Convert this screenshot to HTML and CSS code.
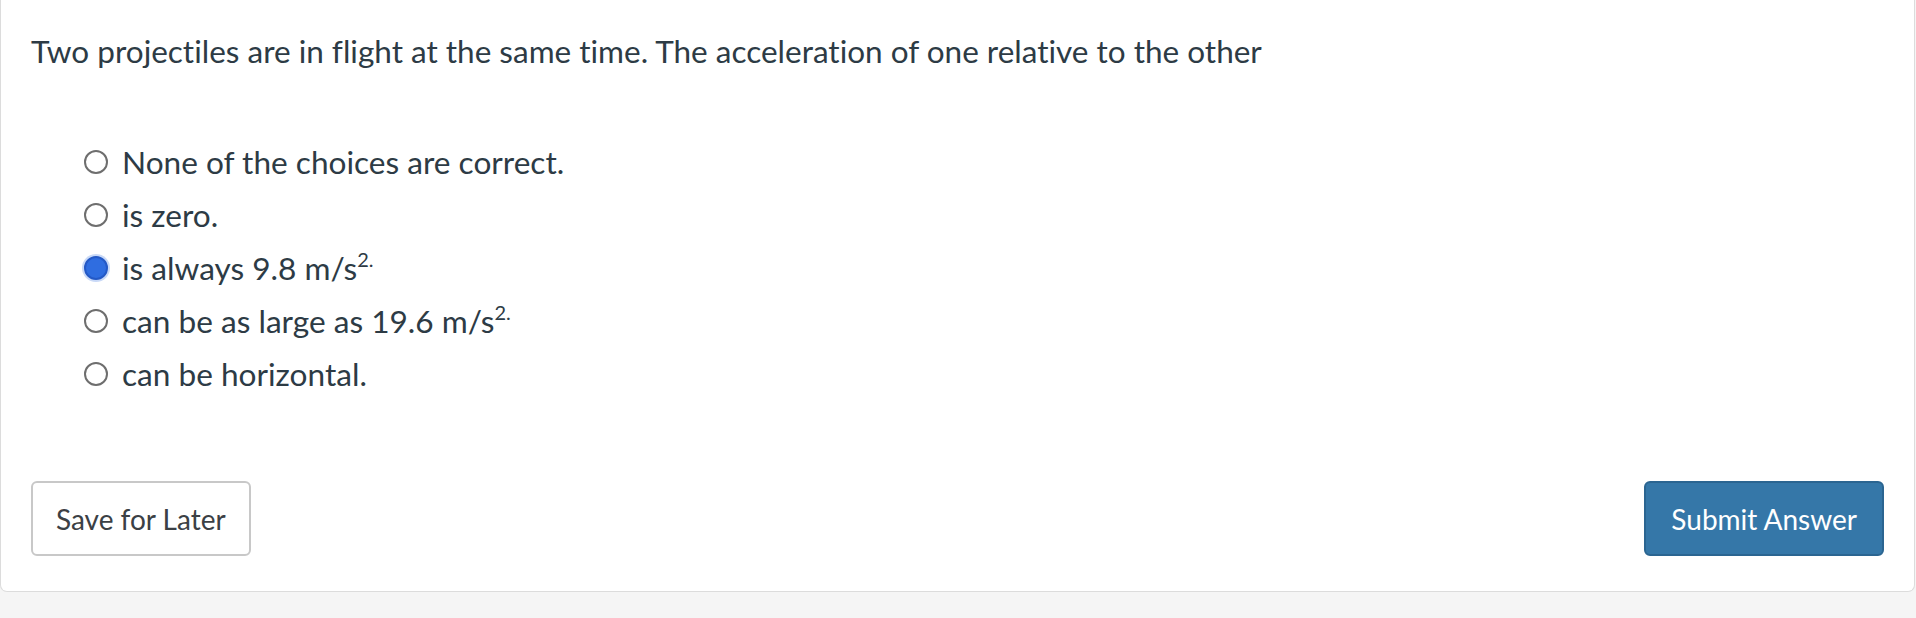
FILE: index.html
```html
<!DOCTYPE html>
<html>
<head lang="en">
    <meta charset="UTF-8">
    <title>Question</title>
    <link rel="stylesheet" href="styles.css">
</head>
<body>
<div class="card">
    <p class="question">Two projectiles are in flight at the same time. The acceleration of one relative to the other</p>

    <ul class="answers">
        <li><label class="option"><input type="radio" name="answer"><span>None of the choices are correct.</span></label></li>
        <li><label class="option"><input type="radio" name="answer"><span>is zero.</span></label></li>
        <li><label class="option"><input type="radio" name="answer" checked><span>is always 9.8 m/s<sup>2.</sup></span></label></li>
        <li><label class="option"><input type="radio" name="answer"><span>can be as large as 19.6 m/s<sup>2.</sup></span></label></li>
        <li><label class="option"><input type="radio" name="answer"><span>can be horizontal.</span></label></li>
    </ul>

    <div class="actions">
        <button class="btn">Save for Later</button>
        <button class="btn btn-primary">Submit Answer</button>
    </div>
</div>
</body>
</html>
```

FILE: styles.css
```css
* {
    margin: 0;
    padding: 0;
    box-sizing: border-box;
}

body {
    background: #f5f5f5;
    font-family: Lato, "Open Sans", sans-serif;
    font-variant-ligatures: no-common-ligatures;
    color: #2d3b45;
}

.card {
    width: 1915px;
    background: #fff;
    border: 1px solid #dcdcdc;
    border-top: 0;
    border-radius: 0 0 7px 7px;
    padding: 29px 30px 35px 30px;
}

.question {
    font-size: 31.5px;
    line-height: 45px;
}

ul {
    list-style: none;
}

.answers {
    margin-top: 61px;
}

.answers li {
    height: 53px;
    display: flex;
    align-items: center;
}

.option {
    display: flex;
    align-items: center;
    font-size: 31.6px;
    cursor: pointer;
}

.option input {
    appearance: none;
    -webkit-appearance: none;
    flex: none;
    width: 24px;
    height: 24px;
    margin-left: 53px;
    margin-right: 14px;
    border: 2px solid #6e6e6e;
    border-radius: 50%;
    background: #fff;
}

.option input:checked {
    background: #2f6de0;
    border-color: #2459c6;
    box-shadow: 0 0 0 2px #c9d9f7;
}

.option sup {
    font-size: 20px;
    line-height: 0;
    vertical-align: 13px;
}

.actions {
    margin-top: 81px;
    display: flex;
    justify-content: space-between;
}

.btn {
    height: 75px;
    padding: 0 23px;
    font-family: inherit;
    font-size: 28px;
    color: #3b4045;
    background: #fff;
    border: 2px solid #c8c8c8;
    border-radius: 6px;
    cursor: pointer;
}

.btn-primary {
    padding: 0 25px;
    color: #fff;
    background: #3577a8;
    border-color: #2b6591;
}
```
